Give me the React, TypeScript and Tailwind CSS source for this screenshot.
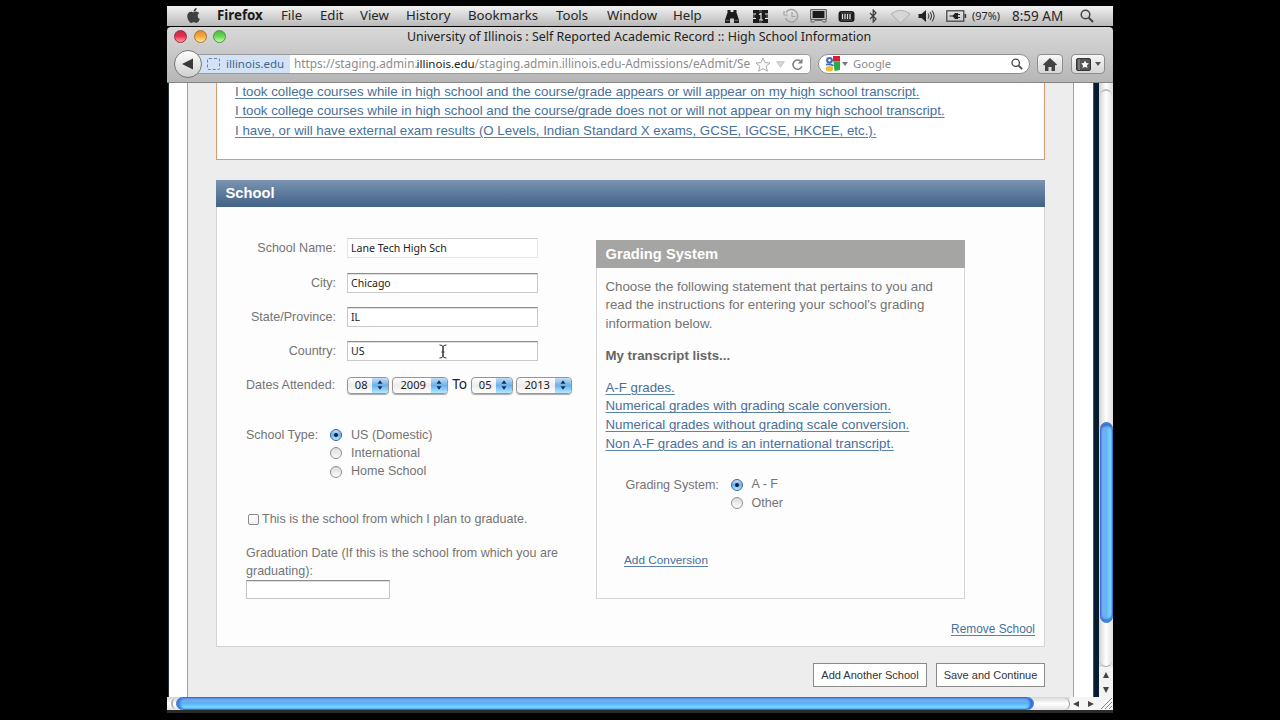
import type { ReactNode } from "react";

const menuItems = [
  { label: "File", box: "w-[39px]" },
  { label: "Edit", box: "w-[40px]" },
  { label: "View", box: "w-[46px]" },
  { label: "History", box: "w-[62px]" },
  { label: "Bookmarks", box: "w-[88px]" },
  { label: "Tools", box: "w-[51px]" },
  { label: "Window", box: "w-[66px]" },
  { label: "Help", box: "w-[51px]" },
];

const courseLinks = [
  "I took college courses while in high school and the course/grade appears or will appear on my high school transcript.",
  "I took college courses while in high school and the course/grade does not or will not appear on my high school transcript.",
  "I have, or will have external exam results (O Levels, Indian Standard X exams, GCSE, IGCSE, HKCEE, etc.).",
];

const gradingLinks = [
  "A-F grades.",
  "Numerical grades with grading scale conversion.",
  "Numerical grades without grading scale conversion.",
  "Non A-F grades and is an international transcript.",
];

const AppleIcon = () => (
  <svg viewBox="0 0 384 512" className="h-[17px] w-[15px]" fill="#3f3f3f">
    <path d="M318.7 268.700c-.2-36.700 16.400-64.400 50-84.800-18.800-26.900-47.200-41.700-84.700-44.600-35.500-2.800-74.300 20.700-88.500 20.700-15 0-49.400-19.700-76.400-19.700C63.300 141.200 4 184.800 4 273.500q0 39.300 14.400 81.200c12.800 36.700 59 126.700 107.200 125.200 25.200-.6 43-17.900 75.800-17.900 31.800 0 48.300 17.900 76.400 17.900 48.600-.7 90.400-82.500 102.600-119.300-65.200-30.700-61.700-90-61.700-91.900zm-56.600-164.200c27.300-32.400 24.800-61.900 24-72.500-24.100 1.400-52 16.400-67.900 34.900-17.500 19.800-27.800 44.300-25.600 71.900 26.100 2 49.900-11.400 69.500-34.300z" />
  </svg>
);

const StatusIcons = () => (
  <>
    <span className="w-7">
      <svg width="16" height="15" viewBox="0 0 16 15" fill="#1c1c1c">
        <path d="M3.500 1h3v2h3V1h3v2.500L15 11v3h-5V9.500H6V14H1v-3l2.500-7.500z" />
        <path d="M1.500 11.500h4M10.500 11.500h4" stroke="#888" strokeWidth=".7" />
      </svg>
    </span>
    <span className="w-[31px]">
      <svg width="17" height="15" viewBox="0 0 17 15" fill="#1c1c1c">
        <path d="M1 1h6v2h3V1h6v5h-2v3h2v5h-6v-2H7v2H1V9h2V6H1z" />
        <path d="M1 1h15v13H1z" opacity=".75" />
        <path d="M7 5.500l2-1v6.500M7 11h4M1 5h3M1 9.500h3M13 5h3M13 9.500h3" stroke="#eee" fill="none" strokeWidth="1.100" />
      </svg>
    </span>
    <span className="w-[27px]">
      <svg width="17" height="16" viewBox="0 0 17 16" fill="none" stroke="#a4a4a4" strokeWidth="1.500">
        <path d="M3 4.500A6.300 6.300 0 1 1 2.500 10" />
        <path d="M1 3v4h4M9 4v4.500h3.500" strokeWidth="1.200" />
      </svg>
    </span>
    <span className="w-7">
      <svg width="17" height="14" viewBox="0 0 17 14">
        <path d="M.7.7h15.600v9.600H.7z" fill="#ddd" stroke="#444" />
        <path d="M2.500 2h12v7h-12z" fill="#1c1c1c" />
        <path d="M1 10.500V13h3l1-1.500h7l1 1.500h3v-2.500" fill="none" stroke="#666" />
      </svg>
    </span>
    <span className="w-[31px]">
      <svg width="17" height="13" viewBox="0 0 17 13">
        <rect x=".5" y="1" width="16" height="11" rx="3" fill="#1c1c1c" />
        <path d="M4.500 4v5M7 4v5M9.500 4v5M12 4v5" stroke="#ddd" strokeWidth="1.300" />
        <path d="M3 3h11M3 10h11" stroke="#777" strokeWidth=".7" />
      </svg>
    </span>
    <span className="w-[21px]">
      <svg width="9" height="14" viewBox="0 0 9 14" fill="none" stroke="#3c3c3c" strokeWidth="1.200">
        <path d="M1 4l6 6-2.800 3V1L7 4l-6 6" />
      </svg>
    </span>
    <span className="w-7">
      <svg width="21" height="15" viewBox="0 0 21 15" fill="#d6d6d6" stroke="#aaa" strokeWidth=".9">
        <path d="M1 5Q10.500-2.500 20 5L10.500 14z" />
      </svg>
    </span>
    <span className="w-7">
      <svg width="17" height="14" viewBox="0 0 17 14">
        <path d="M.5 5h3L8 1v12L3.500 9h-3z" fill="#222" />
        <path d="M10 4.500q1.800 2.500 0 5M12 3q3 4 0 8M14 1.500q4.200 5.500 0 11" fill="none" stroke="#444" strokeWidth="1.100" />
      </svg>
    </span>
    <span className="w-[26px]">
      <svg width="21" height="12" viewBox="0 0 21 12">
        <rect x=".8" y=".8" width="17" height="10.400" fill="none" stroke="#3c3c3c" strokeWidth="1.200" />
        <path d="M18.500 4h1.700v4h-1.700z" fill="#3c3c3c" />
        <path d="M3.500 6h4M14 4.500h-3M14 7.500h-3" stroke="#222" />
        <path d="M6.500 6L9 3h3v6H9z" fill="#222" />
      </svg>
    </span>
  </>
);

const SearchIcon = ({ size }: { size: number }) => (
  <svg width={size} height={size} viewBox="0 0 14 14" fill="none" stroke="#444" strokeWidth="1.500">
    <circle cx="5.500" cy="5.500" r="4.300" />
    <path d="M8.700 8.700L13 13" strokeWidth="2" />
  </svg>
);

const MenuBar = () => (
  <div className="flex h-5 items-center bg-linear-to-b from-[#f2f2f2] to-[#b9b9b9] pl-[19px] text-[13.2px] whitespace-nowrap text-[#262626]">
    <span className="w-[31px] pb-0.5">
      <AppleIcon />
    </span>
    <span className="w-16 text-[13.3px] font-bold text-[#1a1a1a]">Firefox</span>
    {menuItems.map((item) => (
      <span key={item.label} className={item.box}>
        {item.label}
      </span>
    ))}
    <StatusIcons />
    <span className="w-10 text-[10.9px]">(97%)</span>
    <span className="w-[68px] text-[13.5px]">8:59 AM</span>
    <SearchIcon size={14} />
  </div>
);

const TitleBar = () => (
  <div className="flex h-5 items-center pl-[7px]">
    <div className="flex w-[233px] gap-[6.5px]">
      <span className="-mt-px h-[13px] w-[13px] rounded-full border border-[#a3283c] bg-linear-to-b from-[#c4284a] via-[#e8304f] to-[#ff9fa8]" />
      <span className="-mt-px h-[13px] w-[13px] rounded-full border border-[#b0702c] bg-linear-to-b from-[#e08a34] via-[#f7ab3d] to-[#ffef9a]" />
      <span className="-mt-px h-[13px] w-[13px] rounded-full border border-[#4c9340] bg-linear-to-b from-[#55b649] via-[#69d657] to-[#c9ffa8]" />
    </div>
    <p className="text-[12.46px] whitespace-nowrap text-[#222]">
      University of Illinois : Self Reported Academic Record :: High School Information
    </p>
  </div>
);

const Toolbar = () => (
  <div className="flex h-[34px] items-center pl-[7px]">
    <div className="z-10 flex h-7 w-7 shrink-0 items-center justify-center rounded-full border border-[#777] bg-linear-to-b from-white to-[#cfcfcf]">
      <svg width="12" height="12" viewBox="0 0 12 12" fill="#3a3a3a">
        <path d="M0 6L11 .5v11z" />
      </svg>
    </div>
    <div className="-ml-2 flex h-5 w-[617px] shrink-0 items-center rounded-r-sm border border-[#9a9a9a] bg-white text-[11.8px] whitespace-nowrap text-[#8c8c8c]">
      <div className="flex h-full w-[95px] items-center bg-[#d3e2f5] pl-3">
        <span className="h-3 w-[13px] rounded-xs border border-dashed border-[#6484ac]" />
        <span className="ml-[6px] text-[11.5px] text-[#42658f]">illinois.edu</span>
      </div>
      <span className="ml-1 w-[122.500px]">https://staging.admin.</span>
      <span className="w-[58px] text-[11.5px] text-[#222]">illinois.edu</span>
      <span className="w-[280px]">/staging.admin.illinois.edu-Admissions/eAdmit/Se</span>
      <svg width="16" height="15" viewBox="0 0 16 15" fill="#fafafa" stroke="#aaa">
        <path d="M8 1l2 4.600 5 .4-3.800 3.300 1.200 4.900L8 11.600l-4.400 2.600 1.200-4.900L1 6l5-.4z" />
      </svg>
      <svg width="9" height="7" viewBox="0 0 9 7" fill="#d8d8d8" stroke="#bbb" strokeWidth=".8" className="ml-[5px]">
        <path d="M.7.7h7.600L4.500 6.300z" />
      </svg>
      <svg width="13" height="13" viewBox="0 0 13 13" fill="none" stroke="#808080" strokeWidth="1.600" className="ml-[6px]">
        <path d="M10.800 8.500A4.600 4.600 0 1 1 9.500 3" />
        <path d="M11.500.5v5H6.800z" fill="#808080" stroke="none" />
      </svg>
    </div>
    <div className="ml-[7px] flex h-5 w-[212px] shrink-0 items-center rounded-full border border-[#8e8e8e] bg-white pr-[6px] pl-[6px] text-[11.3px] text-[#8c8c8c]">
      <svg width="15" height="16" viewBox="0 0 15 16">
        <path d="M0 0h15v16H0z" fill="#fff" />
        <path d="M8 0h7v5.500H8z" fill="#d8202c" />
        <path d="M8.500 5.500H15V14l-5.500 1z" fill="#2ca84a" />
        <circle cx="4.500" cy="4.300" r="3.400" fill="#3f6fc4" />
        <circle cx="4.500" cy="4.300" r="1.200" fill="#fff" />
        <path d="M1 8.700q4-1 7.500 1" stroke="#3f6fc4" strokeWidth="1.800" fill="none" />
        <ellipse cx="4.500" cy="12.800" rx="3.800" ry="2.700" fill="#f0bd30" />
      </svg>
      <svg width="6" height="4" viewBox="0 0 6 4" fill="#777" className="ml-0.5">
        <path d="M0 0h6L3 4z" />
      </svg>
      <span className="ml-[5px] flex-1">Google</span>
      <SearchIcon size={12} />
    </div>
    <div className="ml-[7px] flex h-5 w-[26px] shrink-0 items-center justify-center rounded-sm border border-[#8e8e8e] bg-linear-to-b from-[#f7f7f7] to-[#d6d6d6]">
      <svg width="14" height="13" viewBox="0 0 14 13" fill="#444">
        <path d="M7 0l7 6.500-1 1L12 7v6H8.500V9h-3v4H2V7l-1 .500-1-1z" />
      </svg>
    </div>
    <div className="ml-2 flex h-5 w-[34px] shrink-0 items-center justify-center gap-1 rounded-sm border border-[#8e8e8e] bg-linear-to-b from-[#f7f7f7] to-[#d6d6d6]">
      <svg width="15" height="13" viewBox="0 0 15 13">
        <rect x=".5" y=".5" width="14" height="12" rx="1.500" fill="#555" stroke="#333" />
        <path d="M3 1v11" stroke="#999" />
        <path d="M9 2.500l1.200 2.600 2.800.3-2.100 1.900.6 2.800L9 8.700l-2.500 1.400.6-2.800L5 5.400l2.800-.3z" fill="#fff" />
      </svg>
      <svg width="6" height="4" viewBox="0 0 6 4" fill="#555">
        <path d="M0 0h6L3 4z" />
      </svg>
    </div>
  </div>
);

const Link = ({ children }: { children: ReactNode }) => (
  <a className="text-[#48709a] underline decoration-[#5b83a6] decoration-1 underline-offset-2">{children}</a>
);

const Field = ({ label, value, faint }: { label: string; value: string; faint?: boolean }) => (
  <div className="flex h-[34px] items-center">
    <label className="w-[90px] text-right">{label}</label>
    <div
      className={
        "ml-[11px] flex h-5 w-[191px] items-center border bg-white pt-px pl-[3px] font-['Noto_Sans'] text-[10.55px] text-[#222] " +
        (faint ? "border-[#e4e4e4] border-t-[#cdcdcd]" : "border-[#c9c9c9] border-t-[#8f8f8f] shadow-[inset_0_1px_0_#dedede]")
      }
    >
      {value}
    </div>
  </div>
);

const Select = ({ value, size }: { value: string; size: string }) => (
  <div
    className={
      "flex h-[17px] overflow-hidden rounded border border-[#959595] bg-linear-to-b from-white via-[#ececec] to-white font-['Noto_Sans'] text-[11.100px] text-[#222] shadow-[0_1px_1px_#aaa] " +
      size
    }
  >
    <span className="flex flex-1 items-center justify-center pl-0.5">{value}</span>
    <span className="flex w-4 items-center justify-center bg-linear-to-b from-[#c3def5] via-[#69b0ec] to-[#b3eaff]">
      <svg width="6" height="10" viewBox="0 0 6 10" fill="#15304f">
        <path d="M.5 3.800L3 .3l2.500 3.500zM.5 6.200L3 9.700l2.500-3.500z" />
      </svg>
    </span>
  </div>
);

const Radio = ({ label, checked }: { label: string; checked?: boolean }) => (
  <div className="flex h-[18.300px] items-center">
    <span
      className={
        "flex h-3 w-3 items-center justify-center rounded-full border " +
        (checked
          ? "border-[#3d6294] bg-linear-to-b from-[#c8e0f6] via-[#6cb1ec] to-[#b5f0ff]"
          : "border-[#8f8f8f] bg-linear-to-b from-[#dcdcdc] to-[#fcfcfc]")
      }
    >
      {checked && <span className="h-1 w-1 rounded-full bg-[#0c1e3c]" />}
    </span>
    <span className="ml-[9px]">{label}</span>
  </div>
);

const SchoolForm = () => (
  <div className="w-[350px] pt-6 pl-[29px] text-[12.54px] whitespace-nowrap text-[#747474]">
    <div className="h-[35px]">
      <Field label="School Name:" value="Lane Tech High Sch" faint />
    </div>
    <Field label="City:" value="Chicago" />
    <Field label="State/Province:" value="IL" />
    <div className="relative">
      <Field label="Country:" value="US" />
      <svg width="8" height="15" viewBox="0 0 8 15" fill="none" stroke="#333" className="absolute top-[10px] left-[193px]">
        <path d="M.5 1Q4 1 4 3v9q0 2-3.500 2M7.500 1Q4 1 4 3v9q0 2 3.500 2M2.500 8h3" />
      </svg>
    </div>
    <div className="flex h-[34px] items-center">
      <label className="w-[90px] text-right">Dates Attended:</label>
      <div className="ml-3 flex items-center">
        <Select value="08" size="w-[42px]" />
        <Select value="2009" size="ml-[3px] w-[56px]" />
        <span className="-mt-0.5 ml-1 w-[19px] font-['Noto_Sans'] text-[13.75px] text-[#222]">To</span>
        <Select value="05" size="w-[42px]" />
        <Select value="2013" size="ml-[3px] w-[56px]" />
      </div>
    </div>
    <div className="mt-6 flex">
      <label className="w-[84px] leading-[18px]">School Type:</label>
      <div>
        <Radio label="US (Domestic)" checked />
        <Radio label="International" />
        <Radio label="Home School" />
      </div>
    </div>
    <div className="mt-[30px] flex h-[18px] items-center pl-[1.5px]">
      <span className="h-[11px] w-[11px] rounded-xs border border-[#8a8a8a] bg-linear-to-b from-white to-[#efefef]" />
      <span className="ml-[3.5px]">This is the school from which I plan to graduate.</span>
    </div>
    <p className="mt-[15px] leading-[18px]">
      Graduation Date (If this is the school from which you are
      <br />
      graduating):
    </p>
    <div className="h-[19px] w-36 border border-[#c4c4c4] border-t-[#8f8f8f] bg-white shadow-[inset_0_1px_0_#dedede]" />
  </div>
);

const GradingPanel = () => (
  <div className="mt-[33px] ml-[29px] h-[359px] w-[369px] border border-[#d6d6d6] text-[13.28px] whitespace-nowrap text-[#747474]">
    <h3 className="-m-px flex h-[28px] items-center bg-[#a5a5a3] pl-[9.5px] text-[14.7px] font-bold text-white">Grading System</h3>
    <div className="pl-[8.5px]">
      <p className="mt-[10.5px] leading-[18.5px]">
        Choose the following statement that pertains to you and
        <br />
        read the instructions for entering your school's grading
        <br />
        information below.
      </p>
      <p className="mt-[13.5px] leading-[18px] font-bold text-[#666]">My transcript lists...</p>
      <ul className="mt-[14px] leading-[18.8px]">
        {gradingLinks.map((text) => (
          <li key={text}>
            <Link>{text}</Link>
          </li>
        ))}
      </ul>
      <div className="mt-[22px] ml-5 flex text-[12.54px]">
        <label className="w-[105px] leading-[18px]">Grading System:</label>
        <div>
          <Radio label="A - F" checked />
          <Radio label="Other" />
        </div>
      </div>
      <p className="mt-[39px] ml-[18.5px] text-[11.8px] leading-[18px]">
        <Link>Add Conversion</Link>
      </p>
    </div>
  </div>
);

const Page = () => (
  <div className="flex h-[615px] w-[930px] overflow-hidden bg-white">
    <div className="ml-[18px] w-[887px] border-x border-[#a0a0a0] bg-[#ededed] pl-7 font-['Liberation_Sans']">
      <div className="flow-root h-[77px] w-[829px] border border-t-0 border-[#d99a72] bg-white pl-[18px] text-[13.3px] leading-[19.8px] whitespace-nowrap">
        <div className="-mt-[1.5px]">
          {courseLinks.map((text) => (
            <p key={text}>
              <Link>{text}</Link>
            </p>
          ))}
        </div>
      </div>
      <section className="mt-5 h-[467px] w-[829px] border border-[#d4d4d4] bg-[#fdfdfd]">
        <h2 className="-mx-px -mt-px flex h-[27px] items-center bg-linear-to-b from-[#7b94b1] to-[#426287] pl-[9.5px] text-[14.7px] font-bold text-white">
          School
        </h2>
        <div className="flex h-[393px]">
          <SchoolForm />
          <GradingPanel />
        </div>
        <p className="mt-[20px] pr-[9px] text-right text-[11.9px] leading-[18px]">
          <Link>Remove School</Link>
        </p>
      </section>
      <div className="mt-4 flex w-[829px] justify-end gap-[9px] text-[11.03px] text-[#333]">
        <button className="h-6 w-[114px] border border-[#8a8a8a] bg-white">Add Another School</button>
        <button className="h-6 w-[109px] border border-[#8a8a8a] bg-white">Save and Continue</button>
      </div>
    </div>
  </div>
);

const VerticalScrollbar = () => (
  <div className="flex w-[14px] flex-col items-center bg-linear-to-r from-[#d2d2d2] via-white to-[#dedede]">
    <div className="mt-[6px] h-2 w-3 rounded-t-full border-t-2 border-[#bcbcbc]" />
    <div className="mt-[325px] h-[201px] w-[13px] rounded-full border border-[#3a6fce] bg-linear-to-r from-[#86a9ea] via-[#62b4f8] to-[#86e6ff] shadow-[inset_0_3px_2px_#3b6fd6,inset_0_-3px_2px_#3b80e0]" />
    <div className="mt-8 h-3 w-3 rounded-b-full border-b border-[#a6a6a6]" />
    <div className="flex w-full flex-1 flex-col items-center justify-around bg-[#f3f3f3]">
      <svg width="6" height="6" viewBox="0 0 6 6" fill="#444">
        <path d="M3 0l3 6H0z" />
      </svg>
      <svg width="6" height="6" viewBox="0 0 6 6" fill="#444">
        <path d="M3 6l3-6H0z" />
      </svg>
    </div>
  </div>
);

const HorizontalScrollbar = () => (
  <div className="flex h-[13px] items-center bg-linear-to-b from-[#d6d6d6] via-white to-[#e4e4e4]">
    <div className="ml-1 h-[11px] w-[5px] rounded-l-full border-l-2 border-[#b2b2b2]" />
    <div className="h-[13px] w-[858px] rounded-full border border-[#3a6fce] bg-linear-to-b from-[#7ba8ee] via-[#5cb2f8] to-[#86eaff] shadow-[inset_3px_0_2px_#3b80e0,inset_-3px_0_2px_#2f6fda]" />
    <div className="ml-[30px] h-3 w-[6px] rounded-r-full border-r border-[#999]" />
    <div className="flex h-full flex-1 items-center bg-[#f5f5f5]">
      <svg width="6" height="6" viewBox="0 0 6 6" fill="#444" className="ml-[3px]">
        <path d="M0 3l6-3v6z" />
      </svg>
      <svg width="6" height="6" viewBox="0 0 6 6" fill="#444" className="ml-[9px]">
        <path d="M6 3L0 0v6z" />
      </svg>
      <svg width="11" height="11" viewBox="0 0 11 11" stroke="#888" className="ml-[7px]">
        <path d="M0 11L11 0M4 11l7-7M8 11l3-3" />
      </svg>
    </div>
  </div>
);

const App = () => (
  <div className="flex h-screen w-screen overflow-hidden bg-black pt-[6px] pl-[167px] font-['Noto_Sans',sans-serif]">
    <div className="w-[946px]">
      <MenuBar />
      <div className="mt-px h-[56px] rounded-t border-b border-[#858585] bg-linear-to-b from-[#d9d9d9] to-[#b6b6b6]">
        <TitleBar />
        <Toolbar />
      </div>
      <div className="flex pl-px">
        <div className="h-[614px] w-px bg-[#263238]" />
        <div className="h-[614px] w-[924px] overflow-hidden">
          <Page />
        </div>
        <div className="w-[6px] border-l border-[#3d5369] bg-[#071c30]" />
        <VerticalScrollbar />
      </div>
      <HorizontalScrollbar />
      <div className="h-[3px] bg-[#2b2b2b]" />
    </div>
  </div>
);

export default App;
